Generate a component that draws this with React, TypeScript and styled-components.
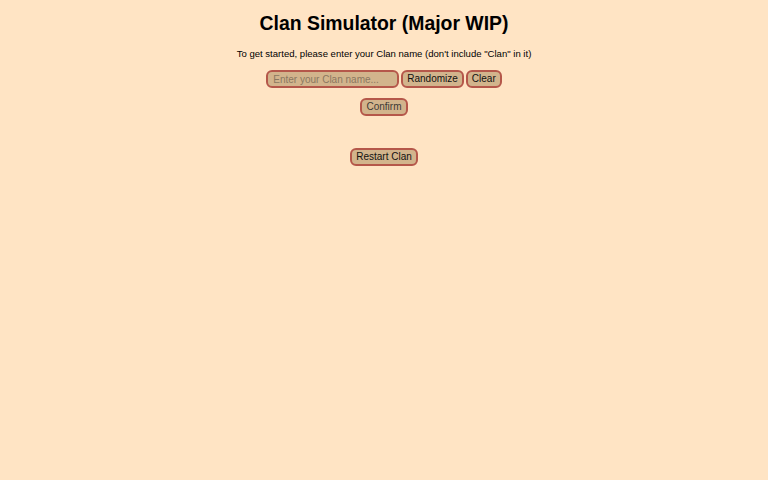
import React, { useState } from "react";
import styled, { createGlobalStyle } from "styled-components";

const Global = createGlobalStyle`
  html, body {
    margin: 0;
    padding: 0;
    background: #ffe4c4;
    font-family: "Liberation Sans", Arial, sans-serif;
  }
`;

const Page = styled.main`
  display: flex;
  flex-direction: column;
  align-items: center;
  padding-top: 11px;
`;

const Title = styled.h1`
  margin: 0;
  font-size: 19.4px;
  font-weight: bold;
  color: #000;
  line-height: 24px;
`;

const Intro = styled.p`
  margin: 13px 0 0;
  font-size: 9.55px;
  line-height: 12px;
  color: #000;
`;

const Row = styled.div`
  display: flex;
  gap: 2px;
  margin-top: 10px;
  align-items: center;
`;

const Field = styled.input`
  box-sizing: border-box;
  width: 133px;
  height: 18px;
  padding: 0 5px;
  border: 2px solid #b5574a;
  border-radius: 6px;
  background: #d2b48c;
  font-family: inherit;
  font-size: 10px;
  color: #000;
  outline: none;
  &::placeholder {
    color: #8a7760;
  }
`;

const Button = styled.button<{ $muted?: boolean; $top?: number }>`
  box-sizing: border-box;
  height: 18px;
  padding: 0 4px;
  margin-top: ${(p) => p.$top ?? 0}px;
  border: 2px solid #b5574a;
  border-radius: 6px;
  background: #d2b48c;
  font-family: inherit;
  font-size: 10px;
  line-height: 14px;
  color: ${(p) => (p.$muted ? "#3d3a35" : "#111")};
  cursor: pointer;
`;

export default function App() {
  const [name, setName] = useState("");
  return (
    <>
      <Global />
      <Page>
        <Title>Clan Simulator (Major WIP)</Title>
        <Intro>To get started, please enter your Clan name (don't include "Clan" in it)</Intro>
        <Row>
          <Field
            placeholder="Enter your Clan name..."
            value={name}
            onChange={(e) => setName(e.target.value)}
          />
          <Button>Randomize</Button>
          <Button onClick={() => setName("")}>Clear</Button>
        </Row>
        <Button $muted $top={10}>Confirm</Button>
        <Button $top={32}>Restart Clan</Button>
      </Page>
    </>
  );
}
